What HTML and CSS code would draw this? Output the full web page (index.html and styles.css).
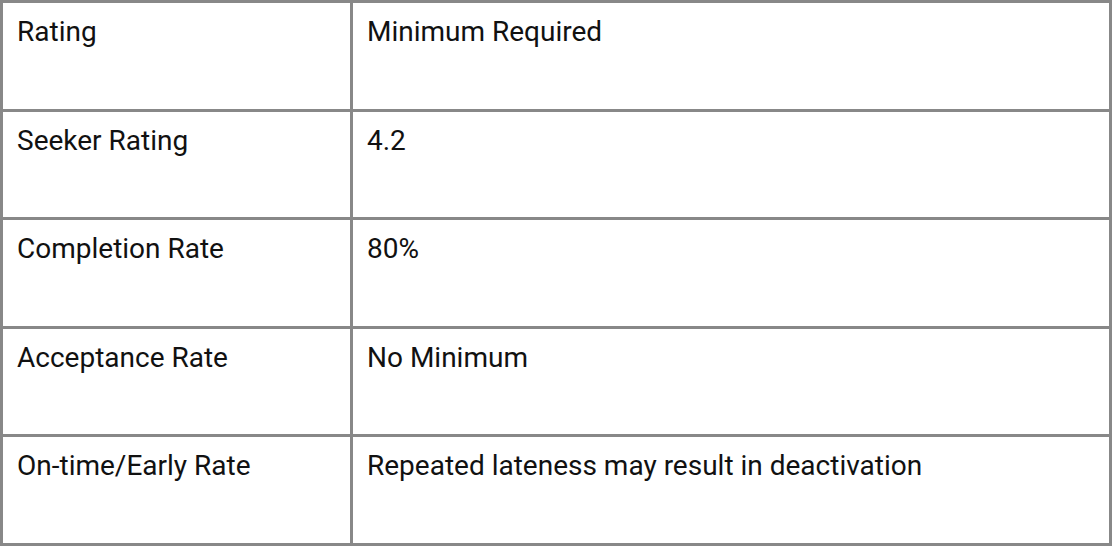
FILE: index.html
```html
<!DOCTYPE html>
<html>
<head>
<meta charset="utf-8">
<link rel="stylesheet" href="styles.css">
</head>
<body>
<table class="req-table">
  <tr><td class="label">Rating</td><td class="value">Minimum Required</td></tr>
  <tr><td class="label">Seeker Rating</td><td class="value">4.2</td></tr>
  <tr><td class="label">Completion Rate</td><td class="value">80%</td></tr>
  <tr><td class="label">Acceptance Rate</td><td class="value">No Minimum</td></tr>
  <tr><td class="label">On-time/Early Rate</td><td class="value">Repeated lateness may result in deactivation</td></tr>
</table>
</body>
</html>
```
FILE: styles.css
```css
html, body {
  margin: 0;
  padding: 0;
  background: #ffffff;
}
.req-table {
  width: 1112px;
  border-collapse: collapse;
  font-family: Roboto, "Liberation Sans", sans-serif;
  font-size: 28px;
  color: #111111;
}
.req-table td {
  border: 3px solid #888888;
  padding: 12px 14px 0 14px;
  height: 108.6px;
  vertical-align: top;
  box-sizing: border-box;
  line-height: 33px;
}
.req-table td.label {
  width: 350px;
}
```
